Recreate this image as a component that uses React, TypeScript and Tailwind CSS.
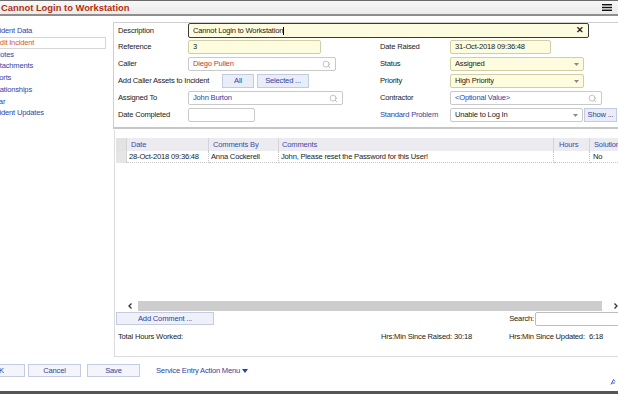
import React from "react";
import { Search } from "lucide-react";

const navItems = [
  { label: "Incident Data", cls: "-ml-[10px]" },
  { label: "Edit Incident", cls: "-ml-[5px]", active: true },
  { label: "Notes", cls: "-ml-[5px]" },
  { label: "Attachments", cls: "-ml-[7px]" },
  { label: "Reports", cls: "-ml-[14px]" },
  { label: "Relationships", cls: "-ml-[11px]" },
  { label: "Calendar", cls: "-ml-[24px]" },
  { label: "Incident Updates", cls: "-ml-[10px]" },
];

const Caret = () => (
  <svg width="5" height="3" viewBox="0 0 5 3" className="shrink-0">
    <path d="M0 0h5L2.5 3z" fill="#8a8a8a" />
  </svg>
);

const Glass = () => <Search size={9} strokeWidth={1.4} className="shrink-0 text-[#8d8d8d]" />;

type BoxProps = {
  w: string;
  yellow?: boolean;
  children?: React.ReactNode;
  right?: React.ReactNode;
  text?: string;
};

const Box = ({ w, yellow, children, right, text = "text-[#222]" }: BoxProps) => (
  <div
    className={`h-full flex items-center justify-between pl-[4px] pr-[4px] rounded-[2px] border ${
      yellow ? "bg-[#fdfcdf] border-[#d3cda6]" : "bg-white border-[#c9c9c9]"
    } ${w} ${text}`}
  >
    <span className="truncate">{children}</span>
    {right}
  </div>
);

const Btn = ({ w, children }: { w: string; children: React.ReactNode }) => (
  <div className={`h-full flex items-center justify-center bg-[#e9edf7] border border-[#c3cbe0] text-[#2f3f9f] ${w}`}>
    {children}
  </div>
);

const App = () => {
  return (
    <div
      className="w-[618px] h-[394px] overflow-hidden flex flex-col bg-white text-[7.6px] leading-none text-[#222] tracking-[-0.2px]"
      style={{ fontFamily: '"Liberation Sans", Arial, sans-serif' }}
    >
      {/* title */}
      <div className="h-[16px] shrink-0 border-t border-[#6b6b6b] border-b-2 border-b-[#8e8e8e] bg-gradient-to-b from-[#f8f8f8] to-[#ebebeb] flex items-center justify-between pr-[6px]">
        <span className="text-[9.4px] font-bold text-[#b1300e] pl-[1px] tracking-normal">Cannot Login to Workstation</span>
        <svg width="10" height="7" viewBox="0 0 10 7">
          <rect x="0" y="0" width="10" height="1.4" fill="#111" />
          <rect x="0" y="2.8" width="10" height="1.4" fill="#111" />
          <rect x="0" y="5.6" width="10" height="1.4" fill="#111" />
        </svg>
      </div>

      <div className="h-[341px] shrink-0 flex">
        {/* side nav */}
        <div className="w-[113px] shrink-0 pt-[9px] overflow-hidden">
          {navItems.map((n) => (
            <div
              key={n.label}
              className={`h-[11.75px] w-[106px] flex items-center overflow-hidden whitespace-nowrap ${
                n.active ? "border border-l-0 border-[#d6d6d6] text-[#cf5a38]" : "text-[#3344a6]"
              }`}
            >
              <span className={n.cls}>{n.label}</span>
            </div>
          ))}
        </div>

        {/* main */}
        <div className="flex-1 pt-[6px] flex flex-col">
          <div className="h-[107px] border border-r-0 border-[#cfcfcf] border-b-2 border-b-[#c6c6c6] pl-[4px]">
            <div className="flex items-center h-[15px] mb-[2px]">
              <span className="w-[70px]">Description</span>
              <div className="w-[401px] h-full flex items-center justify-between pl-[4px] pr-[4px] rounded-[2px] border border-[#3a3a3a] bg-[#fdfcdf]">
                <span>
                  Cannot Login to Workstation<span className="inline-block w-[1px] h-[8px] bg-black align-middle" />
                </span>
                <span className="text-[9px] font-bold">✕</span>
              </div>
            </div>

            <div className="flex h-[14px] mb-[3px]">
              <div className="w-[262px] flex items-center">
                <span className="w-[70px]">Reference</span>
                <Box w="w-[133px]" yellow>3</Box>
              </div>
              <div className="flex items-center">
                <span className="w-[70px]">Date Raised</span>
                <Box w="w-[101px]" yellow>31-Oct-2018 09:36:48</Box>
              </div>
            </div>

            <div className="flex h-[14px] mb-[3px]">
              <div className="w-[262px] flex items-center">
                <span className="w-[70px]">Caller</span>
                <Box w="w-[148px]" text="text-[#c4411d]" right={<Glass />}>Diego Pullen</Box>
              </div>
              <div className="flex items-center">
                <span className="w-[70px]">Status</span>
                <Box w="w-[134px]" yellow right={<Caret />}>Assigned</Box>
              </div>
            </div>

            <div className="flex h-[14px] mb-[3px]">
              <div className="w-[262px] flex items-center">
                <span className="w-[104px]">Add Caller Assets to Incident</span>
                <Btn w="w-[32px]">All</Btn>
                <div className="w-[3px]" />
                <Btn w="w-[52px]">Selected ...</Btn>
              </div>
              <div className="flex items-center">
                <span className="w-[70px]">Priority</span>
                <Box w="w-[134px]" yellow right={<Caret />}>High Priority</Box>
              </div>
            </div>

            <div className="flex h-[14px] mb-[3px]">
              <div className="w-[262px] flex items-center">
                <span className="w-[70px]">Assigned To</span>
                <Box w="w-[155px]" text="text-[#2f3f9f]" right={<Glass />}>John Burton</Box>
              </div>
              <div className="flex items-center">
                <span className="w-[70px]">Contractor</span>
                <Box w="w-[152px]" text="text-[#2f3f9f]" right={<Glass />}>&lt;Optional Value&gt;</Box>
              </div>
            </div>

            <div className="flex h-[14px]">
              <div className="w-[262px] flex items-center">
                <span className="w-[70px]">Date Completed</span>
                <Box w="w-[67px]" />
              </div>
              <div className="flex items-center">
                <span className="w-[70px] text-[#3344a6]">Standard Problem</span>
                <Box w="w-[133px]" right={<Caret />}>Unable to Log In</Box>
                <div className="w-[1px]" />
                <Btn w="w-[33px]">Show ...</Btn>
              </div>
            </div>
          </div>

          {/* comments grid */}
          <div className="mt-[1px] ml-[1px] h-[227px] border-l border-b border-[#dcdcdc] pt-[8px] pl-[1px] flex flex-col">
            <div className="flex h-[13px] bg-[#ebebf0] text-[#3b4cab] whitespace-nowrap">
              <div className="w-[11px] shrink-0 bg-[#e3e3e3] border-r border-[#d4d4d8]" />
              <div className="w-[82px] shrink-0 pl-[4px] flex items-center border-r border-[#d4d4dc]">Date</div>
              <div className="w-[70px] shrink-0 pl-[4px] flex items-center border-r border-[#d4d4dc]">Comments By</div>
              <div className="w-[275px] shrink-0 pl-[3px] flex items-center border-r border-[#d4d4dc]">Comments</div>
              <div className="w-[36px] shrink-0 pl-[5px] flex items-center border-r border-[#d4d4dc]">Hours</div>
              <div className="w-[40px] shrink-0 pl-[4px] flex items-center">Solution</div>
            </div>
            <div className="flex h-[12px] whitespace-nowrap">
              <div className="w-[11px] shrink-0 bg-[#e6e6e6] border-r border-[#d4d4d4]" />
              <div className="w-[82px] shrink-0 pl-[2px] flex items-center border-r border-b border-dotted border-[#c6c6c6]">28-Oct-2018 09:36:48</div>
              <div className="w-[70px] shrink-0 pl-[2px] flex items-center border-r border-b border-dotted border-[#c6c6c6]">Anna Cockerell</div>
              <div className="w-[275px] shrink-0 pl-[2px] flex items-center border-r border-b border-dotted border-[#c6c6c6]">John, Please reset the Password for this User!</div>
              <div className="w-[36px] shrink-0 border-r border-b border-dotted border-[#c6c6c6]" />
              <div className="w-[40px] shrink-0 pl-[3px] flex items-center border-b border-dotted border-[#c6c6c6]">No</div>
            </div>

            <div className="h-[138px]" />

            <div className="flex h-[10px]">
              <div className="w-[22px] flex items-center justify-end pr-[6px]">
                <svg width="4" height="6" viewBox="0 0 4 6">
                  <path d="M3.5 0.5L1 3l2.5 2.5" fill="none" stroke="#333" strokeWidth="1.3" />
                </svg>
              </div>
              <div className="flex-1 bg-[#cdcdcd]" />
              <div className="w-[28px] flex items-center justify-center">
                <svg width="4" height="6" viewBox="0 0 4 6">
                  <path d="M0.5 0.5L3 3L0.5 5.5" fill="none" stroke="#333" strokeWidth="1.3" />
                </svg>
              </div>
            </div>

            <div className="flex h-[14px] mt-[1px] items-center">
              <div className="w-[98px] h-[13px] self-start flex items-center justify-center bg-[#eef1f9] border border-[#c5cce0] text-[#2f3f9f]">
                Add Comment ...
              </div>
              <div className="ml-auto flex items-center h-full -mr-[6px]">
                <span>Search:</span>
                <div className="w-[101px] h-[14px] ml-[1px] rounded-l-[2px] border border-[#bdbdbd] bg-white" />
              </div>
            </div>

            <div className="flex items-center h-[10px] mt-[6px] pl-[2px] whitespace-nowrap">
              <span className="w-[263px]">Total Hours Worked:</span>
              <span className="w-[73px]">Hrs:Min Since Raised:</span>
              <span className="w-[55px]">30:18</span>
              <span className="w-[80px]">Hrs:Min Since Updated:</span>
              <span>6:18</span>
            </div>
          </div>
        </div>
      </div>

      {/* footer */}
      <div className="flex-1 border-b-[3px] border-[#555] pt-[7px] flex flex-col">
        <div className="flex items-center h-[13px] whitespace-nowrap">
          <div className="-ml-[28px] w-[53px] h-full flex items-center justify-center bg-[#f3f5fb] border border-[#c5cbe0] text-[#2f3f9f]">OK</div>
          <div className="ml-[3px] w-[53px] h-full flex items-center justify-center bg-[#f3f5fb] border border-[#c5cbe0] text-[#2f3f9f]">Cancel</div>
          <div className="ml-[6px] w-[53px] h-full flex items-center justify-center bg-[#f3f5fb] border border-[#c5cbe0] text-[#2f3f9f]">Save</div>
          <div className="ml-[16px] flex items-center gap-[2px] text-[#2f3f9f]">
            <span>Service Entry Action Menu</span>
            <svg width="6" height="4" viewBox="0 0 6 4">
              <path d="M0 0h6L3 4z" fill="#2f3f9f" />
            </svg>
          </div>
        </div>
        <div className="flex justify-end pr-[2px] mt-[2px]">
          <svg width="6" height="6" viewBox="0 0 6 6">
            <path d="M1 5.5L3.5 0.5L5 2.5M2 4h3" fill="none" stroke="#4a63c8" strokeWidth="1" />
          </svg>
        </div>
      </div>
    </div>
  );
};

export default App;
